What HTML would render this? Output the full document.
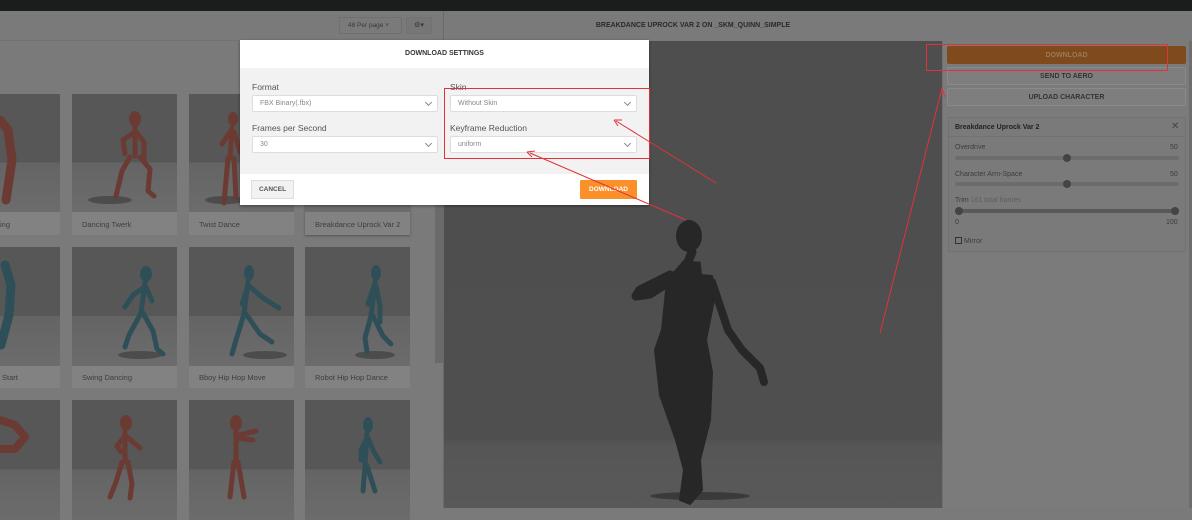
<!DOCTYPE html>
<html><head><meta charset="utf-8"><style>
*{box-sizing:border-box;margin:0;padding:0}
body{width:1192px;height:508px;overflow:hidden;background:#7a7a7a;font-family:"Liberation Sans",sans-serif;position:relative}
.abs{position:absolute}
.card{position:absolute;background:#828282}
.card .img{position:absolute;left:0;top:0;right:0;background:linear-gradient(#575757 0,#575757 58%,#646464 58%,#6c6c6c 100%)}
.card .lbl{position:absolute;left:10px;font-size:7.5px;color:#3e3e3e}
.lab{font-size:8.5px;color:#555;position:absolute}
.selbox{position:absolute;height:17px;background:#fff;border:1px solid #ddd;border-radius:2px;font-size:7px;color:#888;padding:4px 7px}
.selbox:after{content:"";position:absolute;right:6px;top:4px;width:4px;height:4px;border-right:1px solid #888;border-bottom:1px solid #888;transform:rotate(45deg)}
.rbtn{position:absolute;left:947px;width:239px;height:18px;border:1px solid #8a8a8a;background:#7e7e7e;border-radius:2px;font-size:7px;font-weight:bold;color:#333;text-align:center;line-height:17px}
.rt{font-size:7px;color:#3c3c3c;position:absolute}
.trk{position:absolute;left:955px;width:224px;height:4px;background:#6c6c6c;border-radius:2px}
.knob{position:absolute;width:8px;height:8px;border-radius:50%;background:#444}
</style></head><body>
<div class="abs" style="left:0;top:0;width:1192px;height:11px;background:#1b1c1c"></div>
<div class="abs" style="left:0;top:11px;width:444px;height:30px;background:#7a7a7a;border-bottom:1px solid #727272"></div>
<div class="abs" style="left:339px;top:17px;width:63px;height:17px;border:1px solid #6f6f6f;border-radius:2px;font-size:6.5px;color:#3a3a3a;padding:4px 0 0 8px">48 Per page ˅</div>
<div class="abs" style="left:406px;top:17px;width:26px;height:17px;border:1px solid #727272;background:#767676;border-radius:2px;font-size:7px;color:#333;text-align:center;line-height:16px">⚙▾</div>
<div class="abs" style="left:435px;top:41px;width:8px;height:322px;background:#6a6a6a"></div>
<div class="abs" style="left:443px;top:11px;width:1px;height:497px;background:#6a6a6a"></div>
<!-- cards -->
<div class="card" style="left:-45px;top:94px;width:105px;height:141px"><div class="img" style="height:118px"></div><div class="lbl" style="top:126px;left:45px">ing</div></div>
<div class="card" style="left:72px;top:94px;width:105px;height:141px"><div class="img" style="height:118px"></div><div class="lbl" style="top:126px">Dancing Twerk</div></div>
<div class="card" style="left:189px;top:94px;width:105px;height:141px"><div class="img" style="height:118px"></div><div class="lbl" style="top:126px">Twist Dance</div></div>
<div class="card" style="left:305px;top:94px;width:105px;height:141px;box-shadow:0 1px 2px #555"><div class="img" style="height:118px"></div><div class="lbl" style="top:126px">Breakdance Uprock Var 2</div></div>
<div class="card" style="left:-45px;top:247px;width:105px;height:141px"><div class="img" style="height:119px"></div><div class="lbl" style="top:126px;left:47px">Start</div></div>
<div class="card" style="left:72px;top:247px;width:105px;height:141px"><div class="img" style="height:119px"></div><div class="lbl" style="top:126px">Swing Dancing</div></div>
<div class="card" style="left:189px;top:247px;width:105px;height:141px"><div class="img" style="height:119px"></div><div class="lbl" style="top:126px">Bboy Hip Hop Move</div></div>
<div class="card" style="left:305px;top:247px;width:105px;height:141px"><div class="img" style="height:119px"></div><div class="lbl" style="top:126px">Robot Hip Hop Dance</div></div>
<div class="card" style="left:-45px;top:400px;width:105px;height:120px"><div class="img" style="height:120px"></div></div>
<div class="card" style="left:72px;top:400px;width:105px;height:120px"><div class="img" style="height:120px"></div></div>
<div class="card" style="left:189px;top:400px;width:105px;height:120px"><div class="img" style="height:120px"></div></div>
<div class="card" style="left:305px;top:400px;width:105px;height:120px"><div class="img" style="height:120px"></div></div>
<svg class="abs" style="left:0;top:0" width="444" height="508">
<g fill="#454545" opacity=".8">
<ellipse cx="110" cy="200" rx="22" ry="4"/><ellipse cx="225" cy="200" rx="20" ry="4"/>
<ellipse cx="140" cy="355" rx="22" ry="4"/><ellipse cx="265" cy="355" rx="22" ry="4"/><ellipse cx="375" cy="355" rx="20" ry="4"/>
</g>
<g stroke-linecap="round" stroke-linejoin="round" fill="none">
<g stroke="#6b3a33">
<path d="M135 128 l0 28 M135 132 l-12 8 2 14 M136 132 l8 10 0 16 M130 157 l-8 14 -6 25 M140 157 l10 12 -2 22 6 5" stroke-width="5"/>
<path d="M232 128 l-2 30 M230 132 l-8 12 M234 132 l6 20 M228 158 l-4 45 M234 158 l2 40" stroke-width="5"/>
<path d="M0 120 l8 10 4 30 -6 40" stroke-width="9"/>
<path d="M125 432 l0 30 M125 436 l-8 10 4 6 M126 436 l14 12 M122 462 l-6 20 -6 15 M128 462 l4 22 -2 14" stroke-width="5"/>
<path d="M236 432 l0 30 M236 436 l20-5 M237 438 l16 2 M234 462 l-4 35 M238 462 l6 35" stroke-width="5"/>
<path d="M0 420 l15 5 10 12 -10 12 -15 0" stroke-width="8"/>
</g>
<g stroke="#2f4f58">
<path d="M145 283 l-4 30 M145 287 l-12 8 -8 12 M146 287 l6 14 M141 313 l-12 22 -4 12 M143 313 l10 18 4 18 6 5" stroke-width="5"/>
<path d="M248 282 l-4 32 M248 286 l-6 18 M249 286 l14 12 16 10 M244 314 l-8 26 -4 14 M246 314 l14 20 12 8" stroke-width="5"/>
<path d="M375 282 l-4 34 M374 286 l-6 18 M376 286 l4 20 0 16 M371 316 l-6 22 2 14 M373 316 l10 20 8 8" stroke-width="5"/>
<path d="M5 265 l6 20 -2 30 -8 30" stroke-width="9"/>
<path d="M367 434 l-2 32 M367 438 l-6 12 0 10 M368 438 l6 14 6 10 M365 466 l-2 25 M367 466 l8 25" stroke-width="5"/>
</g>
</g>
<g fill="#6b3a33"><ellipse cx="135" cy="119" rx="6" ry="8"/><ellipse cx="233" cy="119" rx="5" ry="7"/><ellipse cx="126" cy="423" rx="6" ry="8"/><ellipse cx="236" cy="423" rx="6" ry="8"/></g>
<g fill="#2f4f58"><ellipse cx="146" cy="274" rx="6" ry="8"/><ellipse cx="249" cy="273" rx="5" ry="8"/><ellipse cx="376" cy="273" rx="5" ry="8"/><ellipse cx="368" cy="425" rx="5" ry="8"/></g>
</svg>
<!-- viewer -->
<div class="abs" style="left:444px;top:11px;width:498px;height:30px;background:#7a7a7a;font-size:7px;font-weight:bold;color:#2a2a2a;text-align:center;line-height:30px">BREAKDANCE UPROCK VAR 2 ON _SKM_QUINN_SIMPLE</div>
<div class="abs" style="left:444px;top:41px;width:498px;height:467px;background:linear-gradient(#4e4e4e 0,#4f4f4f 85%,#565656 87%,#595959 100%)"></div>
<svg class="abs" style="left:0;top:0" width="942" height="508">
<ellipse cx="700" cy="496" rx="50" ry="4" fill="#3a3a3a"/>
<g fill="#272727" stroke="#272727" stroke-linejoin="round" stroke-linecap="round">
<ellipse cx="689" cy="236" rx="13" ry="16" stroke="none"/>
<path d="M668 272 L712 276 L714 300 L706 340 L712 372 L710 420 L700 460 L702 490 L690 504 L680 500 L684 470 L676 440 L660 395 L655 350 L662 330 Z" stroke-width="2"/>
<path d="M670 275 L640 290 L636 296 L650 294 L672 280 L688 262 L692 252" fill="none" stroke-width="9"/>
<path d="M712 282 L728 330 L742 350 L760 368 L764 382" fill="none" stroke-width="8"/>
<path d="M682 262 L700 262 L702 278 L680 278 Z"/>
</g>
</svg>
<!-- right panel -->
<div class="abs" style="left:942px;top:41px;width:250px;height:467px;background:#7b7b7b;border-left:1px solid #6f6f6f"></div>
<div class="abs" style="left:1189px;top:41px;width:3px;height:467px;background:#6d6d6d"></div>
<div class="rbtn" style="top:46px;background:#7f4a1c;border-color:#7f4a1c;color:#9a7a5a">DOWNLOAD</div>
<div class="rbtn" style="top:67px">SEND TO AERO</div>
<div class="rbtn" style="top:88px">UPLOAD CHARACTER</div>
<div class="abs" style="left:948px;top:117px;width:238px;height:135px;border:1px solid #727272;background:#7a7a7a"></div>
<div class="abs" style="left:948px;top:117px;width:238px;height:20px;border-bottom:1px solid #727272"></div>
<div class="rt" style="left:955px;top:124px;font-weight:bold;color:#222">Breakdance Uprock Var 2</div>
<div class="rt" style="left:1171px;top:121px;font-size:10px;color:#444">✕</div>
<div class="rt" style="left:955px;top:144px">Overdrive</div><div class="rt" style="left:1170px;top:144px">50</div>
<div class="trk" style="top:156px"></div><div class="knob" style="left:1063px;top:154px"></div>
<div class="rt" style="left:955px;top:171px">Character Arm-Space</div><div class="rt" style="left:1170px;top:171px">50</div>
<div class="trk" style="top:182px"></div><div class="knob" style="left:1063px;top:180px"></div>
<div class="rt" style="left:955px;top:197px">Trim <span style="color:#5e5e5e">161 total frames</span></div>
<div class="trk" style="top:209px;background:#595959"></div><div class="knob" style="left:955px;top:207px"></div><div class="knob" style="left:1171px;top:207px"></div>
<div class="rt" style="left:955px;top:219px">0</div><div class="rt" style="left:1166px;top:219px">100</div>
<div class="abs" style="left:955px;top:237px;width:7px;height:7px;border:1px solid #333"></div>
<div class="rt" style="left:964px;top:238px">Mirror</div>
<!-- modal -->
<div class="abs" style="left:240px;top:40px;width:409px;height:165px;background:#fff;box-shadow:0 1px 3px rgba(0,0,0,.4)">
<div class="abs" style="left:0;top:0;width:409px;height:28px;font-size:7px;font-weight:bold;color:#333;text-align:center;line-height:28px">DOWNLOAD SETTINGS</div>
<div class="abs" style="left:0;top:28px;width:409px;height:106px;background:#f2f2f2"></div>
<div class="lab" style="left:12px;top:42px">Format</div>
<div class="selbox" style="left:12px;top:55px;width:186px">FBX Binary(.fbx)</div>
<div class="lab" style="left:12px;top:83px">Frames per Second</div>
<div class="selbox" style="left:12px;top:96px;width:186px">30</div>
<div class="lab" style="left:210px;top:42px">Skin</div>
<div class="selbox" style="left:210px;top:55px;width:187px">Without Skin</div>
<div class="lab" style="left:210px;top:83px">Keyframe Reduction</div>
<div class="selbox" style="left:210px;top:96px;width:187px">uniform</div>
<div class="abs" style="left:11px;top:140px;width:43px;height:19px;border:1px solid #ddd;background:#f2f2f2;font-size:6.5px;font-weight:bold;color:#555;text-align:center;line-height:17px">CANCEL</div>
<div class="abs" style="left:340px;top:140px;width:57px;height:19px;background:#fb8f2a;border-radius:1px;font-size:6.5px;font-weight:bold;color:#fff;text-align:center;line-height:19px">DOWNLOAD</div>
</div>
<!-- annotations -->
<svg class="abs" style="left:0;top:0" width="1192" height="508">
<g stroke="#e0323a" stroke-width="1" fill="none">
<rect x="926.5" y="44.5" width="241" height="26"/>
<rect x="444.5" y="88.5" width="205" height="70"/>
<line x1="880" y1="333" x2="942" y2="88"/>
<line x1="716" y1="183" x2="616" y2="121"/>
<line x1="686" y1="220" x2="530" y2="153"/>
<path d="M942 88 l-2 9 M942 88 l3 9"/>
<path d="M614 120 l8 0 M614 120 l4 6"/>
<path d="M527 152 l8-1 M527 152 l5 5"/>
</g>
</svg>
</body></html>
